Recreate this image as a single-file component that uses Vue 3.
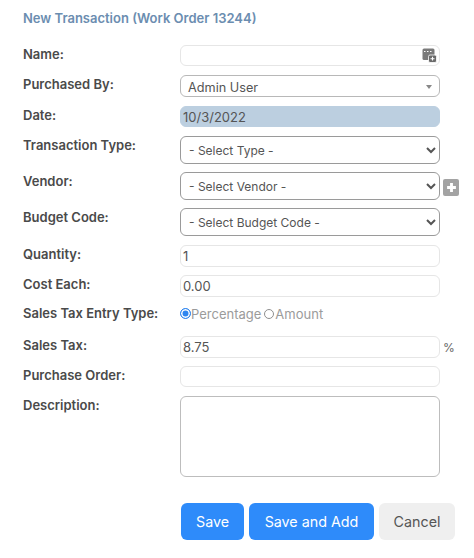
<template>
  <div class="page">
    <h1 class="title">New Transaction (Work Order 13244)</h1>

    <form class="form" @submit.prevent>
      <div class="row">
        <label class="label">Name:</label>
        <div class="field name-field">
          <input class="input h21" type="text" />
          <svg class="name-icon" width="15" height="15" viewBox="0 0 15 15">
            <rect x="0.5" y="0.5" width="12" height="11.5" rx="1.5" fill="#7a7a7a" />
            <path d="M2 3.5h1.5M5 3.5h1.5M8 3.5h1.5" stroke="#fff" stroke-width="1" />
            <rect x="6.5" y="7" width="8" height="7.5" rx="1.5" fill="#6a6a6a" stroke="#fff" stroke-width="0.8" />
            <path d="M8.5 10.7h4M10.5 8.8v3.8" stroke="#fff" stroke-width="1.1" />
          </svg>
        </div>
      </div>

      <div class="row">
        <label class="label">Purchased By:</label>
        <div class="field">
          <div class="combo">
            <span>Admin User</span>
            <i class="combo-arrow"></i>
          </div>
        </div>
      </div>

      <div class="row">
        <label class="label">Date:</label>
        <div class="field">
          <input class="input h21 date" type="text" value="10/3/2022" />
        </div>
      </div>

      <div v-for="sel in selects" :key="sel.label" class="row select-row">
        <label class="label">{{ sel.label }}</label>
        <div class="field">
          <select class="select">
            <option>{{ sel.placeholder }}</option>
          </select>
          <span v-if="sel.add" class="add-btn">
            <svg width="11" height="11" viewBox="0 0 10 10">
              <path d="M5 1v8M1 5h8" stroke="#fff" stroke-width="2.6" />
            </svg>
          </span>
        </div>
      </div>

      <div class="row">
        <label class="label">Quantity:</label>
        <div class="field"><input class="input h22" type="text" value="1" /></div>
      </div>

      <div class="row tight-row">
        <label class="label">Cost Each:</label>
        <div class="field"><input class="input h22" type="text" value="0.00" /></div>
      </div>

      <div class="row radio-row">
        <label class="label">Sales Tax Entry Type:</label>
        <div class="field radios">
          <span class="radio on"></span><span class="radio-text">Percentage</span>
          <span class="radio off"></span><span class="radio-text">Amount</span>
        </div>
      </div>

      <div class="row">
        <label class="label">Sales Tax:</label>
        <div class="field">
          <input class="input h22" type="text" value="8.75" />
          <span class="suffix">%</span>
        </div>
      </div>

      <div class="row tight-row">
        <label class="label">Purchase Order:</label>
        <div class="field"><input class="input h21" type="text" /></div>
      </div>

      <div class="row">
        <label class="label">Description:</label>
        <div class="field"><textarea class="textarea"></textarea></div>
      </div>

      <div class="actions">
        <button class="btn primary save">Save</button>
        <button class="btn primary save-add">Save and Add</button>
        <button class="btn cancel">Cancel</button>
      </div>
    </form>
  </div>
</template>

<script setup>
const selects = [
  { label: 'Transaction Type:', placeholder: '- Select Type -' },
  { label: 'Vendor:', placeholder: '- Select Vendor -', add: true },
  { label: 'Budget Code:', placeholder: '- Select Budget Code -' }
]
</script>

<style scoped>
.page {
  width: 474px;
  height: 558px;
  box-sizing: border-box;
  padding: 11px 0 0 23px;
  overflow: hidden;
  background: #fff;
  font-family: Inter, "Liberation Sans", sans-serif;
}

.title {
  margin: 0 0 19px;
  font-size: 13px;
  line-height: 15px;
  font-weight: 600;
  color: #6b8db0;
}

.form {
  display: flex;
  flex-direction: column;
  gap: 9px;
}

.row {
  display: flex;
  align-items: flex-start;
}

.select-row + .select-row,
.tight-row {
  margin-top: -1px;
}

.label {
  width: 157px;
  flex-shrink: 0;
  font-size: 13px;
  line-height: 18px;
  font-weight: 600;
  color: #4a4a4a;
}

.field {
  position: relative;
  display: flex;
  align-items: center;
}

.input,
.select,
.combo,
.textarea {
  box-sizing: border-box;
  width: 260px;
  margin: 0;
  font-family: inherit;
  font-size: 13px;
  color: #555;
  background: #fff;
  border-radius: 6px;
  outline: none;
}

.input {
  display: block;
  padding: 0 2px;
  border: 1px solid #e6e6e6;
}

.h21 { height: 21px; }
.h22 { height: 22px; }

.date {
  background: #bccfe0;
  border-color: #bccfe0;
}

.name-icon {
  position: absolute;
  right: 3px;
  top: 3px;
}

.combo {
  display: flex;
  align-items: center;
  justify-content: space-between;
  height: 22px;
  padding: 2px 7px 0;
  border: 1px solid #b8b8b8;
  font-size: 12.7px;
}

.combo-arrow {
  width: 0;
  height: 0;
  border-left: 3px solid transparent;
  border-right: 3px solid transparent;
  border-top: 4px solid #888;
}

.select {
  display: block;
  height: 28px;
  padding: 0 4px;
  border: 1px solid #9a9a9a;
  font-size: 12px;
}

.add-btn {
  position: absolute;
  left: 263px;
  top: 7px;
  display: flex;
  align-items: center;
  justify-content: center;
  width: 16px;
  height: 17px;
  border-radius: 2px;
  background: #a3a3a3;
}

.radio-row {
  height: 23px;
  margin-top: -2px;
}

.radios {
  height: 19px;
  font-size: 13px;
  color: #9b9b9b;
}

.radio {
  box-sizing: border-box;
  border-radius: 50%;
}

.radio.on {
  width: 11px;
  height: 11px;
  border: 1px solid #2f86f0;
  background: #2f86f0;
  box-shadow: inset 0 0 0 1.5px #fff;
}

.radio.off {
  width: 10px;
  height: 10px;
  margin: 0 1px 0 3px;
  border: 1px solid #8f8f8f;
}

.suffix {
  position: absolute;
  left: 263px;
  font-size: 12px;
  color: #666;
}

.textarea {
  display: block;
  height: 81px;
  border: 1px solid #bdbdbd;
  resize: none;
}

.actions {
  display: flex;
  gap: 5px;
  margin: 17px 0 0 158px;
}

.btn {
  height: 37px;
  padding: 0;
  border: 0;
  border-radius: 6px;
  font-family: inherit;
  font-size: 14.3px;
}

.primary {
  background: #2e8bfa;
  color: #fff;
}

.save { width: 63px; }
.save-add { width: 125px; }

.cancel {
  width: 76px;
  background: #efefef;
  color: #555;
}
</style>
